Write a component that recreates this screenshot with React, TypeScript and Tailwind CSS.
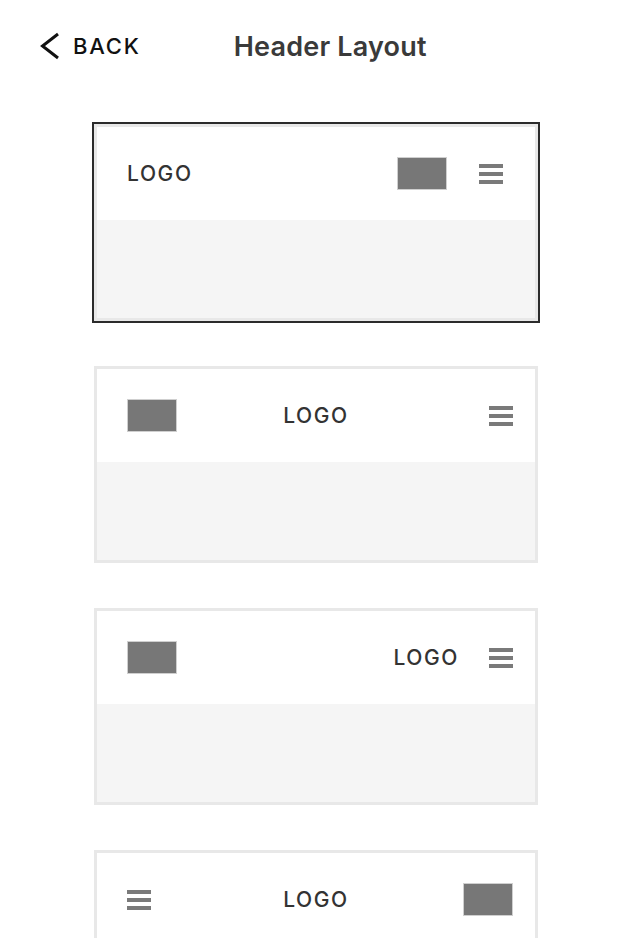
const FONT = { fontFamily: 'Inter, "Liberation Sans", Arial, sans-serif' };

function Logo() {
    return (
        <span className="text-[21px] font-medium leading-none tracking-[1.6px] text-[#333333]" style={FONT}>
            LOGO
        </span>
    );
}

function Block() {
    return <div className="h-[33px] w-[50px] border border-[#cfcfcf] bg-[#777777]" />;
}

function Burger() {
    return (
        <div className="flex w-[24px] flex-col gap-[4px]">
            <div className="h-[4px] bg-[#7a7a7a]" />
            <div className="h-[4px] bg-[#7a7a7a]" />
            <div className="h-[4px] bg-[#7a7a7a]" />
        </div>
    );
}

function LayoutCard({ selected, children }: { selected?: boolean; children: React.ReactNode }) {
    return (
        <div
            className={
                selected
                    ? "flex h-[197px] w-[444px] flex-col border-[3px] border-[#e8e8e8] outline-2 outline-[#2b2b2b]"
                    : "flex h-[197px] w-[444px] flex-col border-[3px] border-[#e8e8e8]"
            }
        >
            <div className="relative flex h-[93px] items-center bg-white">{children}</div>
            <div className="flex-1 bg-[#f5f5f5]" />
        </div>
    );
}

export default function App() {
    return (
        <div className="h-[938px] overflow-hidden bg-white" style={FONT}>
            {/* top bar */}
            <div className="flex h-[92px] items-center pl-[40px]">
                <button className="flex items-center gap-[13px] text-[#111111]">
                    <svg width="20" height="28" viewBox="0 0 20 28" fill="none">
                        <path d="M18 2 L2.5 14 L18 26" stroke="#111111" strokeWidth="3" strokeLinejoin="miter" />
                    </svg>
                    <span className="text-[22px] font-medium leading-none tracking-[1.8px]" style={FONT}>
                        BACK
                    </span>
                </button>
                <h1 className="ml-[93px] text-[27px] font-semibold leading-none tracking-[0.2px] text-[#3a3a3a]" style={FONT}>
                    Header Layout
                </h1>
            </div>

            {/* layout options */}
            <div className="mt-[32px] flex flex-col items-center gap-[45px]">
                <LayoutCard selected>
                    <div className="flex w-full items-center pl-[30px] pr-[32px]">
                        <Logo />
                        <div className="ml-auto flex items-center gap-[32px]">
                            <Block />
                            <Burger />
                        </div>
                    </div>
                </LayoutCard>

                <LayoutCard>
                    <div className="flex w-full items-center justify-between pl-[30px] pr-[22px]">
                        <Block />
                        <Burger />
                    </div>
                    <div className="absolute inset-0 flex items-center justify-center">
                        <Logo />
                    </div>
                </LayoutCard>

                <LayoutCard>
                    <div className="flex w-full items-center pl-[30px] pr-[22px]">
                        <Block />
                        <div className="ml-auto flex items-center gap-[30px]">
                            <Logo />
                            <Burger />
                        </div>
                    </div>
                </LayoutCard>

                <LayoutCard>
                    <div className="flex w-full items-center justify-between pl-[30px] pr-[22px]">
                        <Burger />
                        <Block />
                    </div>
                    <div className="absolute inset-0 flex items-center justify-center">
                        <Logo />
                    </div>
                </LayoutCard>
            </div>
        </div>
    );
}
